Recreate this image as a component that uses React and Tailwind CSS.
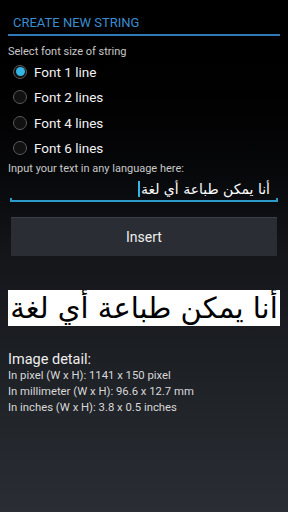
import React from 'react';

const Radio = ({ checked, label }) => (
    <div className="flex items-center h-[25.5px] pl-[13px]">
        <div className="w-[14px] h-[14px] rounded-full border border-[#5a5a5a] flex items-center justify-center bg-[#111]">
            {checked && <div className="w-[9px] h-[9px] rounded-full bg-[#33b5e5]" />}
        </div>
        <span className="ml-[7px] text-[13.5px] text-[#f2f2f2]">{label}</span>
    </div>
);

const App = () => {
    const arabic = 'أنا يمكن طباعة أي لغة';

    return (
        <div className="w-[288px] h-[512px] overflow-hidden bg-linear-to-b from-black via-[#14161a] to-[#2a2e34] font-['Roboto',sans-serif]">
            {/* header */}
            <div className="pt-[15px] px-[8px]">
                <div className="pl-[5px] text-[13px] leading-[16px] text-[#3a8dd0] pb-[3px]">CREATE NEW STRING</div>
                <div className="h-[2px] bg-[#2f78b6]" />
            </div>

            <div className="px-[8px] pt-[9px] text-[11px] leading-[14px] text-[#c8c8c8]">Select font size of string</div>

            <div>
                <Radio checked label="Font 1 line" />
                <Radio label="Font 2 lines" />
                <Radio label="Font 4 lines" />
                <Radio label="Font 6 lines" />
            </div>

            <div className="px-[8px] pt-[1px] text-[11px] leading-[14px] text-[#c8c8c8]">Input your text in any language here:</div>

            {/* text input */}
            <div className="mx-[10px] mt-[3px] relative h-[23px]">
                <div className="flex justify-end items-center h-[20px] pr-[8px]">
                    <span className="w-[2px] h-[16px] bg-[#33b5e5] mr-[1px]" />
                    <span dir="rtl" className="text-[14px] leading-[20px] text-white font-['DejaVu_Sans',sans-serif]">{arabic}</span>
                </div>
                <div className="absolute left-0 right-0 bottom-0 h-[4px] border-l-2 border-r-2 border-b-2 border-[#2d9bc9]" />
            </div>

            {/* insert button */}
            <div className="px-[11px] pt-[15px]">
                <div className="h-[39px] bg-[#2a2d33] border-t border-[#3a3e45] flex items-center justify-center text-[14px] text-[#eeeeee]">
                    Insert
                </div>
            </div>

            {/* preview image */}
            <div className="px-[8px] pt-[34px]">
                <div className="h-[36px] bg-white flex items-center justify-center overflow-hidden">
                    <span dir="rtl" className="text-[29px] leading-[36px] text-black font-['DejaVu_Sans',sans-serif]">{arabic}</span>
                </div>
            </div>

            {/* details */}
            <div className="px-[8px] pt-[25px] text-[#d8d8d8]">
                <div className="text-[14.5px] leading-[17px] text-[#eeeeee]">Image detail:</div>
                <div className="text-[11.3px] leading-[16px]">In pixel (W x H): 1141 x 150 pixel</div>
                <div className="text-[11.3px] leading-[16px]">In millimeter (W x H): 96.6 x 12.7 mm</div>
                <div className="text-[11.3px] leading-[16px]">In inches (W x H): 3.8 x 0.5 inches</div>
            </div>
        </div>
    );
};

export default App;
